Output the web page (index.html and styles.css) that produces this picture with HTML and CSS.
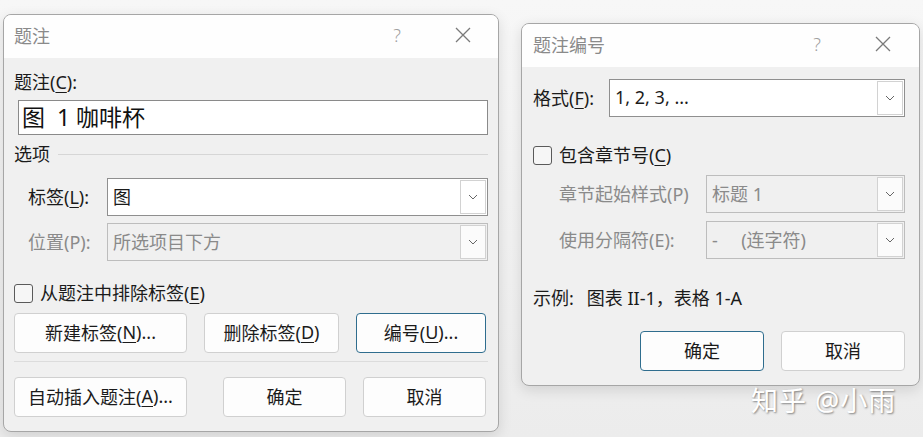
FILE: index.html
```html
<!DOCTYPE html>
<html lang="zh-CN">
<head>
    <meta charset="UTF-8">
    <title>题注</title>
    <link rel="stylesheet" href="styles.css">
</head>
<body>
<div class="desktop">
    <!-- 题注 dialog -->
    <div class="dialog dialog-caption">
        <div class="titlebar">
            <span class="title">题注</span>
            <span class="help">?</span>
            <svg class="close" width="16" height="16" viewBox="0 0 16 16"><path d="M1 1 L15 15 M15 1 L1 15" stroke="#7a7a7a" stroke-width="1.3" fill="none"/></svg>
        </div>
        <div class="body">
            <div class="label">题注(<u>C</u>):</div>
            <div class="textbox">图&nbsp;&nbsp;1 咖啡杯</div>
            <div class="group">
                <span>选项</span>
                <div class="group-line"></div>
            </div>
            <div class="row indent">
                <span class="row-label w79">标签(<u>L</u>):</span>
                <div class="combo">
                    <span>图</span>
                    <div class="drop"><svg width="10" height="6" viewBox="0 0 10 6"><path d="M1 1 L5 5 L9 1" stroke="#666" stroke-width="1" fill="none"/></svg></div>
                </div>
            </div>
            <div class="row indent gap7">
                <span class="row-label w79 muted">位置(P):</span>
                <div class="combo disabled">
                    <span>所选项目下方</span>
                    <div class="drop"><svg width="10" height="6" viewBox="0 0 10 6"><path d="M1 1 L5 5 L9 1" stroke="#666" stroke-width="1" fill="none"/></svg></div>
                </div>
            </div>
            <div class="check-row mt22">
                <div class="checkbox"></div>
                <span>从题注中排除标签(<u>E</u>)</span>
            </div>
            <div class="button-row mt10">
                <div class="btn w173">新建标签(<u>N</u>)...</div>
                <div class="btn w135 ml17">删除标签(<u>D</u>)</div>
                <div class="btn primary w130 ml17">编号(<u>U</u>)...</div>
            </div>
            <div class="separator"></div>
            <div class="button-row">
                <div class="btn w173">自动插入题注(<u>A</u>)...</div>
                <div class="btn w123 ml36">确定</div>
                <div class="btn w123 ml17">取消</div>
            </div>
        </div>
    </div>

    <!-- 题注编号 dialog -->
    <div class="dialog dialog-number">
        <div class="titlebar">
            <span class="title">题注编号</span>
            <span class="help">?</span>
            <svg class="close" width="16" height="16" viewBox="0 0 16 16"><path d="M1 1 L15 15 M15 1 L1 15" stroke="#7a7a7a" stroke-width="1.3" fill="none"/></svg>
        </div>
        <div class="body">
            <div class="row">
                <span class="row-label w76">格式(<u>F</u>):</span>
                <div class="combo">
                    <span>1, 2, 3, ...</span>
                    <div class="drop"><svg width="10" height="6" viewBox="0 0 10 6"><path d="M1 1 L5 5 L9 1" stroke="#666" stroke-width="1" fill="none"/></svg></div>
                </div>
            </div>
            <div class="check-row mt28">
                <div class="checkbox"></div>
                <span>包含章节号(<u>C</u>)</span>
            </div>
            <div class="row sub mt10">
                <span class="row-label w147 muted">章节起始样式(P)</span>
                <div class="combo disabled">
                    <span>标题 1</span>
                    <div class="drop"><svg width="10" height="6" viewBox="0 0 10 6"><path d="M1 1 L5 5 L9 1" stroke="#666" stroke-width="1" fill="none"/></svg></div>
                </div>
            </div>
            <div class="row sub gap8">
                <span class="row-label w147 muted">使用分隔符(E):</span>
                <div class="combo disabled">
                    <span>-&nbsp;&nbsp;&nbsp;&nbsp;&nbsp;(连字符)</span>
                    <div class="drop"><svg width="10" height="6" viewBox="0 0 10 6"><path d="M1 1 L5 5 L9 1" stroke="#666" stroke-width="1" fill="none"/></svg></div>
                </div>
            </div>
            <div class="example"><span class="example-key">示例:</span>图表 II-1，表格 1-A</div>
            <div class="button-row end">
                <div class="btn primary w124">确定</div>
                <div class="btn w124 ml17">取消</div>
            </div>
        </div>
    </div>

    <div class="watermark">知乎 @小雨</div>
</div>
</body>
</html>
```

FILE: styles.css
```css
* {
    box-sizing: border-box;
}
body {
    margin: 0;
    background: linear-gradient(#f7f7f7, #ececec);
    font-family: "Noto Sans", "Noto Sans CJK SC", sans-serif;
    color: #1b1b1b;
    font-size: 18px;
}
u {
    text-decoration-thickness: 1px;
    text-underline-offset: 3px;
}
.desktop {
    position: relative;
    width: 923px;
    height: 437px;
    display: flex;
    align-items: flex-start;
    padding: 14px 0 0 3px;
}

/* dialog frame */
.dialog {
    border: 1px solid #a6a6a6;
    border-radius: 8px;
    background: #f0f0f0;
    overflow: hidden;
    box-shadow: 0 4px 14px rgba(0, 0, 0, 0.12);
    display: flex;
    flex-direction: column;
}
.dialog-caption {
    width: 496px;
    height: 418px;
}
.dialog-number {
    width: 399px;
    height: 363px;
    margin: 9px 0 0 22px;
}
.titlebar {
    height: 43px;
    background: #fefefe;
    display: flex;
    align-items: center;
    padding: 0 0 3px 10px;
    flex-shrink: 0;
}
.title {
    color: #8a8a8a;
    font-size: 18px;
    flex: 1;
}
.help {
    color: #a0a0a0;
    font-size: 18px;
    font-weight: 300;
    margin-right: 54px;
}
.close {
    margin-right: 27px;
}
.dialog-number .titlebar {
    padding-left: 11px;
}
.dialog-number .close {
    margin-right: 28px;
}

/* body */
.body {
    flex: 1;
    padding: 12px 10px 0 10px;
    display: flex;
    flex-direction: column;
}
.dialog-number .body {
    padding: 12px 14px 0 11px;
}
.label {
    line-height: 24px;
    height: 24px;
}
.textbox {
    margin: 6px 0 0 4px;
    height: 35px;
    border: 1px solid #8a8a8a;
    background: #fff;
    font-size: 23px;
    line-height: 32px;
    padding-left: 3px;
    color: #111;
}
.group {
    display: flex;
    align-items: center;
    margin-top: 7px;
    height: 24px;
    line-height: 24px;
}
.group-line {
    flex: 1;
    height: 1px;
    background: #d6d6d6;
    margin-left: 8px;
}
.row {
    display: flex;
    align-items: center;
}
.row.indent {
    padding-left: 14px;
    margin-top: 12px;
}
.row.indent.gap7 {
    margin-top: 7px;
}
.row.sub {
    padding-left: 26px;
}
.gap8 {
    margin-top: 8px;
}
.row-label {
    flex-shrink: 0;
    padding-bottom: 2px;
}
.w79 { width: 79px; }
.w76 { width: 76px; }
.w147 { width: 147px; }
.muted {
    color: #8a8a8a;
}
.combo {
    flex: 1;
    height: 38px;
    border: 1px solid #8f8f8f;
    background: #fff;
    display: flex;
    align-items: center;
    padding: 1px 1px 1px 5px;
}
.combo > span {
    flex: 1;
    padding-bottom: 2px;
}
.combo.disabled {
    background: #f0f0f0;
    border-color: #bdbdbd;
    color: #8a8a8a;
}
.drop {
    width: 26px;
    height: 100%;
    border: 1px solid #d2d2d2;
    background: #fff;
    display: flex;
    align-items: center;
    justify-content: center;
}
.combo.disabled .drop {
    background: #fbfbfb;
}
.check-row {
    display: flex;
    align-items: center;
    height: 20px;
}
.check-row span {
    padding-bottom: 2px;
}
.checkbox {
    width: 19px;
    height: 19px;
    border: 1px solid #5a5a5a;
    border-radius: 3px;
    background: #f6f6f6;
    margin-right: 7px;
}
.mt22 { margin-top: 22px; }
.mt10 { margin-top: 10px; }
.mt28 { margin-top: 28px; }
.button-row {
    display: flex;
}
.button-row.end {
    justify-content: flex-end;
    margin-top: 21px;
}
.btn {
    height: 40px;
    border: 1px solid #d0d0d0;
    border-radius: 4px;
    background: #fdfdfd;
    display: flex;
    align-items: center;
    justify-content: center;
    flex-shrink: 0;
    padding-bottom: 2px;
}
.btn.primary {
    border-color: #2f6d8e;
}
.w173 { width: 173px; }
.w135 { width: 135px; }
.w130 { width: 130px; }
.w123 { width: 123px; }
.w124 { width: 124px; }
.ml17 { margin-left: 17px; }
.ml36 { margin-left: 36px; }
.separator {
    height: 1px;
    background: #dcdcdc;
    margin: 8px 0 15px 0;
}
.example {
    margin-top: 27px;
    line-height: 24px;
}
.example-key {
    margin-right: 13px;
}

/* overlay */
.watermark {
    position: absolute;
    left: 751px;
    top: 380px;
    font-size: 27px;
    color: #fff;
    text-shadow: 1px 1px 2px rgba(0, 0, 0, 0.45);
    letter-spacing: 1px;
}
```
